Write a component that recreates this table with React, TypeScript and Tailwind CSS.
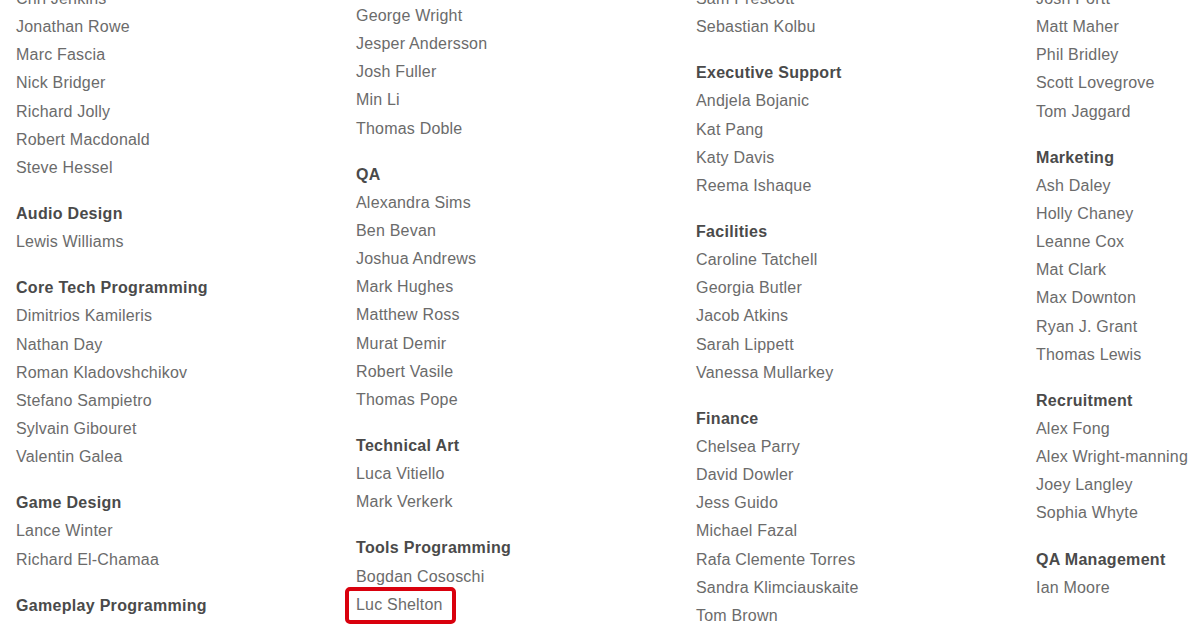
import React from "react";

type Section = { title?: string; names: string[]; highlight?: string };

const columns: { offset: string; sections: Section[] }[] = [
  {
    offset: "-mt-[15px]",
    sections: [
      {
        names: [
          "Chri Jenkins",
          "Jonathan Rowe",
          "Marc Fascia",
          "Nick Bridger",
          "Richard Jolly",
          "Robert Macdonald",
          "Steve Hessel",
        ],
      },
      { title: "Audio Design", names: ["Lewis Williams"] },
      {
        title: "Core Tech Programming",
        names: [
          "Dimitrios Kamileris",
          "Nathan Day",
          "Roman Kladovshchikov",
          "Stefano Sampietro",
          "Sylvain Gibouret",
          "Valentin Galea",
        ],
      },
      { title: "Game Design", names: ["Lance Winter", "Richard El-Chamaa"] },
      { title: "Gameplay Programming", names: [] },
    ],
  },
  {
    offset: "mt-[2px]",
    sections: [
      {
        names: [
          "George Wright",
          "Jesper Andersson",
          "Josh Fuller",
          "Min Li",
          "Thomas Doble",
        ],
      },
      {
        title: "QA",
        names: [
          "Alexandra Sims",
          "Ben Bevan",
          "Joshua Andrews",
          "Mark Hughes",
          "Matthew Ross",
          "Murat Demir",
          "Robert Vasile",
          "Thomas Pope",
        ],
      },
      { title: "Technical Art", names: ["Luca Vitiello", "Mark Verkerk"] },
      {
        title: "Tools Programming",
        names: ["Bogdan Cososchi", "Luc Shelton"],
        highlight: "Luc Shelton",
      },
    ],
  },
  {
    offset: "-mt-[15px]",
    sections: [
      { names: ["Sam Prescott", "Sebastian Kolbu"] },
      {
        title: "Executive Support",
        names: ["Andjela Bojanic", "Kat Pang", "Katy Davis", "Reema Ishaque"],
      },
      {
        title: "Facilities",
        names: [
          "Caroline Tatchell",
          "Georgia Butler",
          "Jacob Atkins",
          "Sarah Lippett",
          "Vanessa Mullarkey",
        ],
      },
      {
        title: "Finance",
        names: [
          "Chelsea Parry",
          "David Dowler",
          "Jess Guido",
          "Michael Fazal",
          "Rafa Clemente Torres",
          "Sandra Klimciauskaite",
          "Tom Brown",
        ],
      },
    ],
  },
  {
    offset: "-mt-[15px]",
    sections: [
      {
        names: [
          "Josh Portt",
          "Matt Maher",
          "Phil Bridley",
          "Scott Lovegrove",
          "Tom Jaggard",
        ],
      },
      {
        title: "Marketing",
        names: [
          "Ash Daley",
          "Holly Chaney",
          "Leanne Cox",
          "Mat Clark",
          "Max Downton",
          "Ryan J. Grant",
          "Thomas Lewis",
        ],
      },
      {
        title: "Recruitment",
        names: [
          "Alex Fong",
          "Alex Wright-manning",
          "Joey Langley",
          "Sophia Whyte",
        ],
      },
      { title: "QA Management", names: ["Ian Moore"] },
    ],
  },
];

export default function App() {
  return (
    <div className="w-[1200px] h-[627px] overflow-hidden bg-white font-['Liberation_Sans',Arial,sans-serif] text-[16px] leading-[28.14px]">
      <div className="grid grid-cols-[340px_340px_340px_1fr] pl-4">
        {columns.map((col, ci) => (
          <div key={ci} className={`flex flex-col gap-[18px] ${col.offset}`}>
            {col.sections.map((sec, si) => (
              <div key={si} className="flex flex-col">
                {sec.title && (
                  <h3 className="font-bold text-[#4a4a4a] tracking-[0.3px]">
                    {sec.title}
                  </h3>
                )}
                {sec.names.map((n) =>
                  n === sec.highlight ? (
                    <div key={n} className="relative self-start">
                      <span className="text-[#6b6b6b] tracking-[0.2px]">{n}</span>
                      <span className="absolute -left-[11px] -right-[13px] top-[-4px] bottom-[-5px] border-4 border-[#d9000d] rounded-[5px]" />
                    </div>
                  ) : (
                    <p key={n} className="text-[#6b6b6b] tracking-[0.2px]">
                      {n}
                    </p>
                  )
                )}
              </div>
            ))}
          </div>
        ))}
      </div>
    </div>
  );
}
